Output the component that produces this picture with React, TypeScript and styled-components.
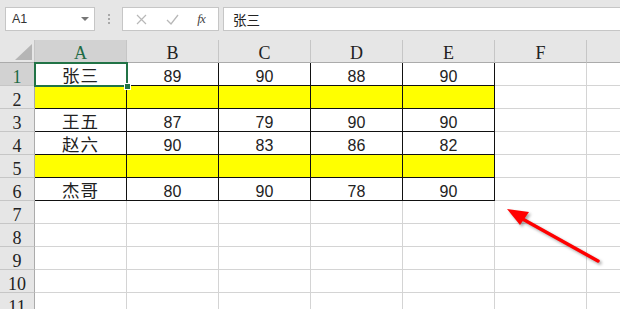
import React from 'react';
import styled, { createGlobalStyle } from 'styled-components';

const GlobalStyle = createGlobalStyle`
  html, body {
    margin: 0;
    padding: 0;
    background: #ffffff;
    overflow: hidden;
  }
`;

const COLS = ['A', 'B', 'C', 'D', 'E', 'F', 'G'];
const ROW_COUNT = 11;

// A1:E6, null rows are the yellow spacer rows
const data: (string[] | null)[] = [
  ['张三', '89', '90', '88', '90'],
  null,
  ['王五', '87', '79', '90', '90'],
  ['赵六', '90', '83', '86', '82'],
  null,
  ['杰哥', '80', '90', '78', '90'],
];

const Page = styled.div`
  position: relative;
  width: 620px;
  height: 309px;
  overflow: hidden;
  background: #e6e6e6;
`;

const Toolbar = styled.div`
  display: flex;
  align-items: stretch;
  height: 40px;
  box-sizing: border-box;
  padding: 7px 0 9px 5px;
  background: #e6e6e6;
`;

const NameBox = styled.div`
  width: 90px;
  box-sizing: border-box;
  background: #fff;
  border: 1px solid #c6c6c6;
  display: flex;
  align-items: center;
  padding-left: 6px;
  font-family: 'Liberation Sans', Arial, sans-serif;
  font-size: 12.5px;
  color: #333;
`;

const DropArrow = styled.span`
  margin-left: auto;
  margin-right: 5px;
  width: 0;
  height: 0;
  border-left: 4px solid transparent;
  border-right: 4px solid transparent;
  border-top: 4px solid #777;
`;

const Grip = styled.div`
  width: 27px;
  display: flex;
  flex-direction: column;
  align-items: center;
  justify-content: center;
  gap: 2px;

  span {
    width: 2px;
    height: 2px;
    background: #a8a8a8;
  }
`;

const ButtonGroup = styled.div`
  width: 97px;
  box-sizing: border-box;
  background: #fff;
  border: 1px solid #c6c6c6;
  display: flex;
  align-items: center;
  justify-content: space-around;
  padding: 0 4px;
`;

const Fx = styled.span`
  font-family: 'Liberation Serif', 'Times New Roman', serif;
  font-style: italic;
  font-size: 13px;
  color: #444;
  letter-spacing: -1px;
`;

const FormulaInput = styled.div`
  flex: 1;
  margin-left: 4px;
  background: #fff;
  border: 1px solid #c6c6c6;
  border-right: none;
  display: flex;
  align-items: center;
  padding-left: 9px;
  font-family: 'Noto Sans CJK SC', sans-serif;
  font-size: 13.5px;
  color: #222;
`;

const Sheet = styled.div`
  display: grid;
  grid-template-columns: 35px repeat(7, 92px);
  grid-auto-rows: 23px;
  background: #fff;
`;

const Corner = styled.div`
  background: #e6e6e6;
  border-right: 1px solid #c6c6c6;
  border-bottom: 1px solid #ababab;
  box-sizing: border-box;
  display: flex;
  align-items: flex-end;
  justify-content: flex-end;
  padding: 0 2px 2px 0;

  svg {
    display: block;
  }
`;

const ColHead = styled.div<{ $active?: boolean }>`
  box-sizing: border-box;
  background: ${({ $active }) => ($active ? '#d2d2d2' : '#e6e6e6')};
  border-right: 1px solid #c6c6c6;
  border-bottom: 1px solid ${({ $active }) => ($active ? '#217346' : '#ababab')};
  text-align: center;
  font-family: 'Liberation Serif', 'Times New Roman', serif;
  font-size: 18px;
  line-height: 20px;
  padding-top: 3px;
  color: ${({ $active }) => ($active ? '#1e6b45' : '#222')};
  overflow: hidden;
`;

const RowHead = styled.div<{ $active?: boolean }>`
  box-sizing: border-box;
  background: ${({ $active }) => ($active ? '#d2d2d2' : '#e6e6e6')};
  border-right: 1px solid #ababab;
  border-bottom: 1px solid #c6c6c6;
  text-align: center;
  font-family: 'Liberation Serif', 'Times New Roman', serif;
  font-size: 18px;
  line-height: 20px;
  padding-top: 4px;
  color: ${({ $active }) => ($active ? '#1e6b45' : '#222')};
  overflow: hidden;
`;

const Cell = styled.div<{ $table?: boolean; $fill?: string; $cjk?: boolean }>`
  box-sizing: border-box;
  background: ${({ $fill }) => $fill || '#fff'};
  border-right: 1px solid ${({ $table }) => ($table ? '#111' : '#d4d4d4')};
  border-bottom: 1px solid ${({ $table }) => ($table ? '#111' : '#d4d4d4')};
  text-align: center;
  font-family: ${({ $cjk }) =>
    $cjk ? "'Noto Sans CJK SC', sans-serif" : "'Liberation Sans', Arial, sans-serif"};
  font-size: ${({ $cjk }) => ($cjk ? '17.5px' : '16px')};
  line-height: 22px;
  padding-top: ${({ $cjk }) => ($cjk ? '1px' : '3px')};
  letter-spacing: ${({ $cjk }) => ($cjk ? '1px' : '0')};
  color: #222;
  overflow: hidden;
  white-space: nowrap;
`;

const Selection = styled.div`
  position: absolute;
  left: 34px;
  top: 62px;
  width: 94px;
  height: 25px;
  box-sizing: border-box;
  border: 2px solid #217346;
  pointer-events: none;
`;

const FillHandle = styled.div`
  position: absolute;
  right: -5px;
  bottom: -5px;
  width: 5px;
  height: 5px;
  background: #217346;
  border: 1px solid #fff;
`;

const ArrowLayer = styled.svg`
  position: absolute;
  left: 0;
  top: 0;
  pointer-events: none;
  filter: drop-shadow(2px 2px 1.5px rgba(0, 0, 0, 0.35));
`;

export default function App() {
  const rows = Array.from({ length: ROW_COUNT }, (_, i) => i + 1);

  return (
    <Page>
      <GlobalStyle />
      <Toolbar>
        <NameBox>
          A1
          <DropArrow />
        </NameBox>
        <Grip>
          <span />
          <span />
          <span />
        </Grip>
        <ButtonGroup>
          <svg width="11" height="11" viewBox="0 0 11 11">
            <path d="M1 1 L10 10 M10 1 L1 10" stroke="#b8b8b8" strokeWidth="1.2" fill="none" />
          </svg>
          <svg width="13" height="11" viewBox="0 0 13 11">
            <path d="M1 6 L5 10 L12 1" stroke="#b8b8b8" strokeWidth="1.3" fill="none" />
          </svg>
          <Fx>fx</Fx>
        </ButtonGroup>
        <FormulaInput>张三</FormulaInput>
      </Toolbar>

      <Sheet>
        <Corner>
          <svg width="17" height="16" viewBox="0 0 17 16">
            <polygon points="0,16 17,16 17,0" fill="#b5b5b5" />
          </svg>
        </Corner>
        {COLS.map((c) => (
          <ColHead key={c} $active={c === 'A'}>
            {c}
          </ColHead>
        ))}

        {rows.map((r) => {
          const rowData = r <= data.length ? data[r - 1] : undefined;
          const inTable = r <= data.length;
          return (
            <React.Fragment key={r}>
              <RowHead $active={r === 1}>{r}</RowHead>
              {COLS.map((c, ci) => {
                const tableCell = inTable && ci < 5;
                const yellow = tableCell && rowData === null;
                const text = tableCell && rowData ? rowData[ci] : '';
                return (
                  <Cell
                    key={c}
                    $table={tableCell}
                    $fill={yellow ? '#ffff00' : undefined}
                    $cjk={ci === 0}
                  >
                    {text}
                  </Cell>
                );
              })}
            </React.Fragment>
          );
        })}
      </Sheet>

      <Selection>
        <FillHandle />
      </Selection>

      <ArrowLayer width="620" height="309" viewBox="0 0 620 309">
        <line x1="519" y1="217" x2="598" y2="261" stroke="#ff0000" strokeWidth="3.5" strokeLinecap="round" />
        <polygon points="507,209 529,212 520,225" fill="#ff0000" />
      </ArrowLayer>
    </Page>
  );
}
